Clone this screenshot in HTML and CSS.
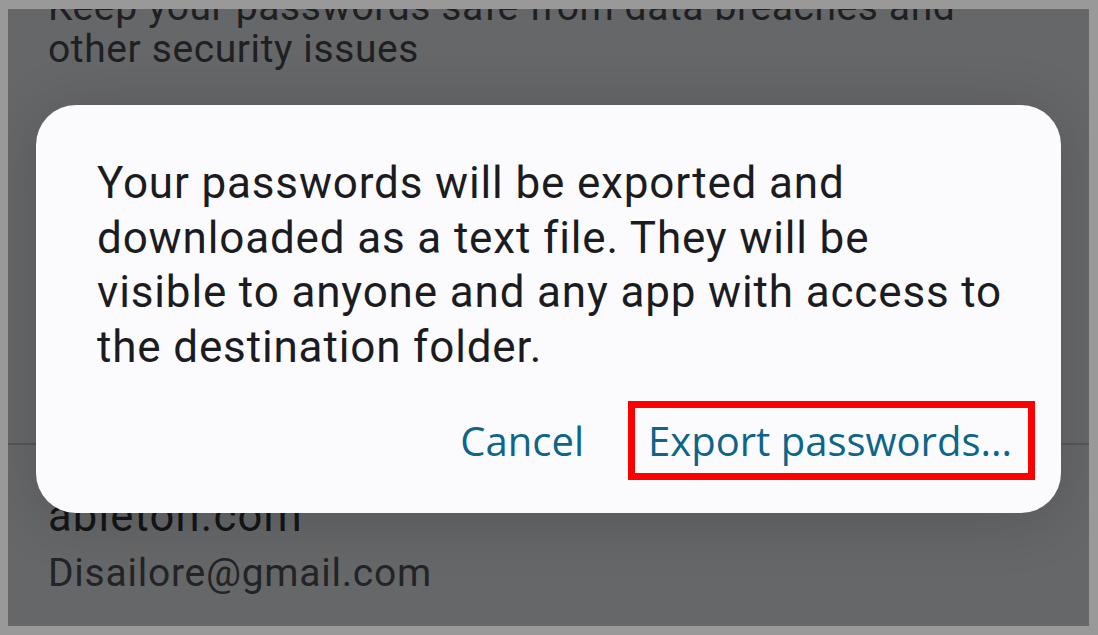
FILE: index.html
```html
<!DOCTYPE html>
<html lang="en">
<head>
<meta charset="utf-8">
<title>Export passwords</title>
<link rel="stylesheet" href="styles.css">
</head>
<body>
<div class="frame">
  <div class="page">
    <div class="description">
      <p>Keep your passwords safe from data breaches and</p>
      <p>other security issues</p>
    </div>
    <div class="divider"></div>
    <div class="item">
      <p class="site">ableton.com</p>
      <p class="user">Disailore@gmail.com</p>
    </div>
  </div>
  <div class="dialog" role="dialog">
    <p class="dialog-text">Your passwords will be exported and downloaded as a text file. They will be visible to anyone and any app with access to the destination folder.</p>
    <div class="actions">
      <button class="btn">Cancel</button>
      <button class="btn btn-highlight">Export passwords...</button>
    </div>
  </div>
</div>
</body>
</html>
```
FILE: styles.css
```css
* { box-sizing: border-box; }
html, body { margin: 0; padding: 0; }
body {
  width: 1098px;
  height: 635px;
  background: #999999;
  font-family: Roboto, "Liberation Sans", sans-serif;
  overflow: hidden;
}
p { margin: 0; }

.frame {
  position: relative;
  margin: 9px 9px 9px 8px;
  width: 1081px;
  height: 617px;
  background: #666768;
  overflow: hidden;
}

.page {
  display: flex;
  flex-direction: column;
}

.description {
  margin-top: -23px;
  padding: 0 40px;
  font-size: 39px;
  letter-spacing: 0.6px;
  line-height: 42px;
  color: #1f2023;
}

.divider {
  margin-top: 373px;
  height: 2px;
  background: #565758;
}

.item {
  margin-top: 43px;
  padding: 0 40px;
  line-height: 57px;
}
.site {
  font-size: 43.5px;
  letter-spacing: 1.2px;
  color: #141516;
}
.user {
  font-size: 39px;
  letter-spacing: 0.75px;
  color: #232427;
}

.dialog {
  position: absolute;
  left: 28px;
  top: 96px;
  width: 1025px;
  padding: 51px 40px 33px 61px;
  background: #fbfbfe;
  border-radius: 40px;
  box-shadow: 0 6px 60px rgba(0, 0, 0, 0.16);
}

.dialog-text {
  max-width: 908px;
  font-size: 44px;
  letter-spacing: 0.85px;
  line-height: 54.6px;
  color: #1b1c1f;
}

.actions {
  display: flex;
  justify-content: flex-end;
  align-items: center;
  gap: 44px;
  margin-top: 27px;
  margin-right: -14px;
}

.btn {
  font-family: "Open Sans", Lato, sans-serif;
  font-weight: 500;
  font-size: 40px;
  color: #0d6588;
  background: none;
  border: 0;
  padding: 0;
  line-height: 65px;
  cursor: pointer;
}

.btn-highlight {
  border: 7px solid #ff0000;
  padding: 0 16px 0 13px;
}
```
